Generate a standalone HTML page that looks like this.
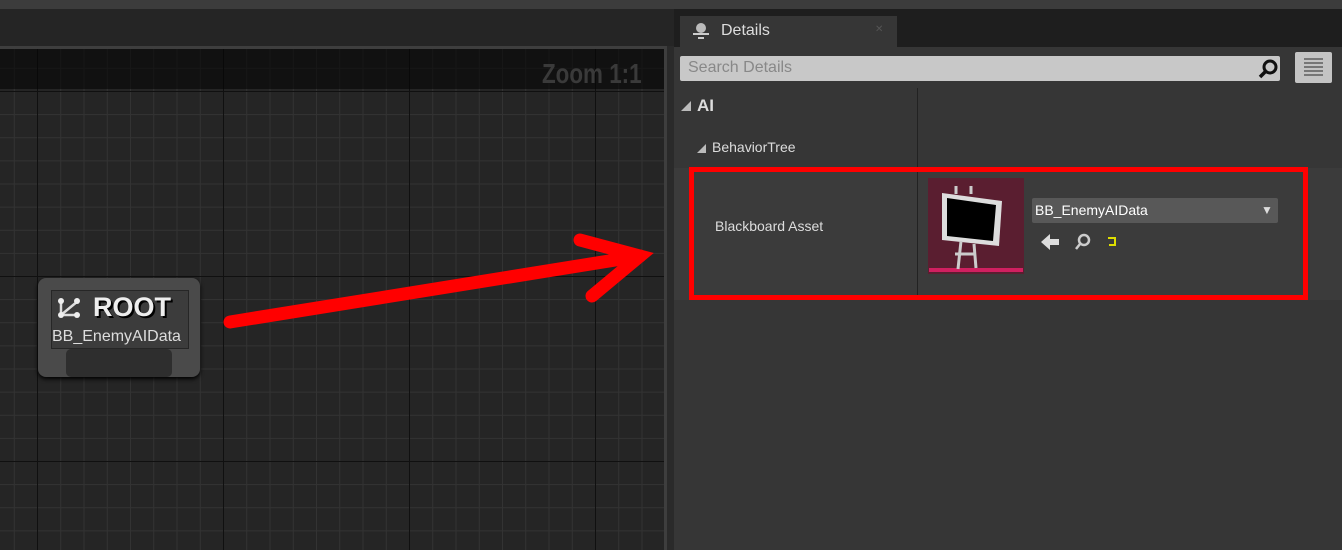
<!DOCTYPE html><html><head><style>
body{margin:0;width:1342px;height:550px;overflow:hidden;background:#252525;font-family:"Liberation Sans",sans-serif;position:relative}
.a{position:absolute}
</style></head><body>
<div class="a" style="left:0;top:0;width:1342px;height:9px;background:#3c3c3c"></div>
<div class="a" style="left:0;top:46px;width:667px;height:504px;background:#3e3e3e"></div>
<div class="a" style="left:0;top:49px;width:664px;height:501px;background-color:#252525;
background-image:linear-gradient(#101010 1px,transparent 1px),linear-gradient(90deg,#101010 1px,transparent 1px),linear-gradient(#333 1px,transparent 1px),linear-gradient(90deg,#333 1px,transparent 1px);
background-size:186px 185px,186px 185px,23.25px 23.125px,23.25px 23.125px;background-position:37px 42px,37px 42px,37px 42px,37px 42px"></div>
<div class="a" style="left:0;top:49px;width:664px;height:40px;background:rgba(5,5,5,.6)"></div>
<div class="a" style="left:542px;top:58px;font-size:28px;font-weight:bold;color:#3a3a3a;transform:scaleX(.8);transform-origin:left">Zoom 1:1</div>
<div class="a" style="left:667px;top:46px;width:7px;height:504px;background:#2a2a2a"></div>
<!-- node -->
<div class="a" style="left:38px;top:278px;width:162px;height:99px;background:#4a4a4a;border-radius:8px;box-shadow:0 2px 4px #000"></div>
<div class="a" style="left:51px;top:290px;width:136px;height:57px;background:#3c3c3c;border:1px solid #262626"></div>
<div class="a" style="left:66px;top:349px;width:106px;height:28px;background:#2e2e2e;border-radius:5px"></div>
<svg class="a" style="left:56px;top:295px" width="28" height="26"><path d="M5 20V6M5 20L22 6M5 20h16" stroke="#ddd" stroke-width="2.5"/><circle cx="5" cy="6" r="3" fill="#eee"/><circle cx="5" cy="20" r="3" fill="#eee"/><circle cx="21" cy="6" r="3" fill="#eee"/><circle cx="21" cy="20" r="3" fill="#eee"/></svg>
<div class="a" style="left:93px;top:292px;font-size:27px;font-weight:bold;color:#eee;text-shadow:2px 2px 0 #000">ROOT</div>
<div class="a" style="left:52px;top:328px;font-size:16px;color:#ddd">BB_EnemyAIData</div>
<!-- arrow -->
<svg class="a" style="left:0;top:0" width="1342" height="550"><g stroke="#ff0000" stroke-width="13" stroke-linecap="round" fill="none"><path d="M230 322L640 256"/><path d="M580 240L640 256L592 296"/></g></svg>
<!-- details -->
<div class="a" style="left:674px;top:9px;width:668px;height:541px;background:#363636"></div>
<div class="a" style="left:674px;top:9px;width:668px;height:38px;background:#1e1e1e"></div>
<div class="a" style="left:680px;top:16px;width:217px;height:31px;background:#363636"></div>
<svg class="a" style="left:690px;top:20px" width="24" height="22"><circle cx="11" cy="8" r="5" fill="#bbb"/><path d="M3 14h16M8 18h6" stroke="#ccc" stroke-width="2"/></svg>
<div class="a" style="left:721px;top:22px;font-size:16px;color:#ddd">Details</div>
<div class="a" style="left:875px;top:24px;font-size:10px;color:#555">✕</div>
<div class="a" style="left:680px;top:56px;width:600px;height:25px;background:#c8c8c8;border-radius:2px"></div>
<div class="a" style="left:688px;top:59px;font-size:16px;color:#888">Search Details</div>
<svg class="a" style="left:1256px;top:57px" width="24" height="24"><circle cx="14" cy="10" r="6" stroke="#111" stroke-width="3" fill="none"/><path d="M9 15l-5 5" stroke="#111" stroke-width="3.5"/></svg>
<div class="a" style="left:1295px;top:52px;width:37px;height:31px;background:#c4c4c4;border-radius:2px"></div>
<div class="a" style="left:1304px;top:58px;width:19px;height:19px;background:repeating-linear-gradient(#777 0 2px,transparent 2px 4px)"></div>
<div class="a" style="left:917px;top:88px;width:1px;height:208px;background:#222"></div>
<svg class="a" style="left:681px;top:100px" width="12" height="12"><path d="M0 11L10 1V11Z" fill="#bbb"/></svg>
<div class="a" style="left:697px;top:96px;font-size:17px;font-weight:bold;color:#ddd">AI</div>
<svg class="a" style="left:697px;top:144px" width="10" height="10"><path d="M0 9L9 0V9Z" fill="#bbb"/></svg>
<div class="a" style="left:712px;top:139px;font-size:14px;color:#ddd">BehaviorTree</div>
<div class="a" style="left:674px;top:168px;width:668px;height:132px;background:#3b3b3b"></div>
<div class="a" style="left:917px;top:168px;width:1px;height:128px;background:#222"></div>
<div class="a" style="left:715px;top:218px;font-size:14px;color:#ddd">Blackboard Asset</div>
<div class="a" style="left:928px;top:178px;width:96px;height:96px;background:#5a1e30"></div>
<div class="a" style="left:929px;top:268px;width:94px;height:4px;background:#d02060"></div>
<svg class="a" style="left:928px;top:178px" width="96" height="96"><path d="M28 8v8M43 8v8" stroke="#ccc" stroke-width="3"/><path d="M14 15l60 8-3 45-57-6z" fill="#ddd"/><path d="M19 20l49 7-3 36-46-5z" fill="#000"/><path d="M33 63l-3 28M46 66l2 24M27 76h20" stroke="#ccc" stroke-width="3"/></svg>
<div class="a" style="left:1032px;top:198px;width:246px;height:25px;background:#585858;border-radius:2px"></div>
<div class="a" style="left:1035px;top:202px;font-size:14px;color:#fff">BB_EnemyAIData</div>
<div class="a" style="left:1261px;top:203px;font-size:12px;color:#ddd">▼</div>
<svg class="a" style="left:1040px;top:233px" width="20" height="18"><path d="M1 9L10 1V6H19V12H10V17Z" fill="#ddd"/></svg>
<svg class="a" style="left:1074px;top:233px" width="18" height="18"><circle cx="10" cy="7" r="5" stroke="#ccc" stroke-width="2.5" fill="none"/><path d="M6 11l-4 5" stroke="#ccc" stroke-width="2.5"/></svg>
<svg class="a" style="left:1106px;top:235px" width="14" height="14"><path d="M2 3h7v7H3" stroke="#dd0" stroke-width="2" fill="none"/></svg>
<div class="a" style="left:689px;top:167px;width:609px;height:123px;border:5px solid #f00"></div>
</body></html>
